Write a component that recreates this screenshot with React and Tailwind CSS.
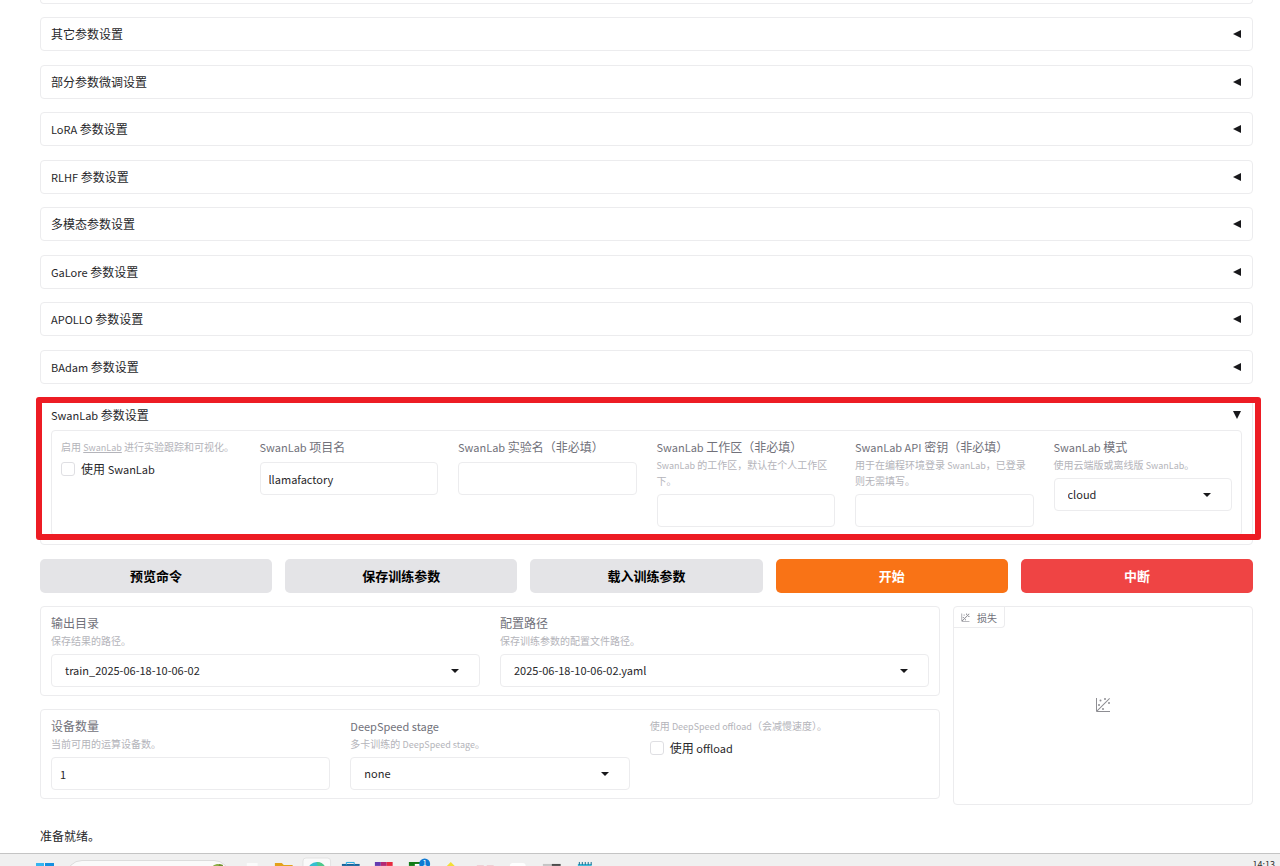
import React, { useState } from "react";

const COLLAPSED = [
  "其它参数设置",
  "部分参数微调设置",
  "LoRA 参数设置",
  "RLHF 参数设置",
  "多模态参数设置",
  "GaLore 参数设置",
  "APOLLO 参数设置",
  "BAdam 参数设置",
];

// latin words are set one size smaller than the chinese text around them
const Label = ({ children }) =>
  children.split(/([A-Za-z]+(?: [A-Za-z]+)*)/).map((part, i) =>
    i % 2 ? <span key={i} className="text-[11px] leading-none">{part}</span> : part
  );

const Small = ({ children }) =>
  children.split(/([A-Za-z]+(?: [A-Za-z]+)*)/).map((part, i) =>
    i % 2 ? <span key={i} className="text-[9px] leading-none">{part}</span> : part
  );

const PlotIcon = ({ className }) => (
  <svg viewBox="0 0 32 32" fill="currentColor" className={className} aria-hidden="true">
    <circle cx="20" cy="4" r="2" />
    <circle cx="8" cy="16" r="2" />
    <circle cx="28" cy="12" r="2" />
    <circle cx="11" cy="7" r="2" />
    <circle cx="16" cy="24" r="2" />
    <path d="M30 3.413L28.586 2L4 26.585V2H2v26a2 2 0 0 0 2 2h26v-2H5.413Z" />
  </svg>
);

const Field = ({ id, label, info, children }) => (
  <div className="min-w-0">
    <label htmlFor={id} className="block pb-[2px] text-xs leading-[17px] whitespace-nowrap text-[#71717a]">
      <Label>{label}</Label>
    </label>
    {info && (
      <p className="text-[10px] leading-4 text-[#b4b4ba]">
        <Small>{info}</Small>
      </p>
    )}
    <div className="mt-[5px]">{children}</div>
  </div>
);

const TextInput = ({ id, value = "" }) => {
  const [text, setText] = useState(value);

  return (
    <input
      id={id}
      type="text"
      value={text}
      onChange={e => setText(e.target.value)}
      className="block h-[33px] w-full rounded border border-[#ececee] bg-white px-2 text-[11px]"
    />
  );
};

const Select = ({ id, value }) => (
  <div className="relative">
    <select
      id={id}
      defaultValue={value}
      className="block h-[33px] w-full appearance-none rounded border border-[#ececee] bg-white px-[13px] text-[11px]"
    >
      <option value={value}>{value}</option>
    </select>
    <svg
      viewBox="0 0 8 4"
      className="pointer-events-none absolute top-[15px] right-[21px] h-1 w-2"
      aria-hidden="true"
    >
      <path d="M0 0h8L4 4z" fill="#18181b" />
    </svg>
  </div>
);

const Checkbox = ({ info, label }) => (
  <div className="min-w-0">
    <p className="pb-[2px] text-[10px] leading-[17px] whitespace-nowrap text-[#b4b4ba]">{info}</p>
    <label className="mt-[5px] flex h-[14px] items-center gap-[6px] text-xs whitespace-nowrap">
      <input
        type="checkbox"
        className="h-[14px] w-[14px] appearance-none rounded-[3px] border border-[#dfdfe3] bg-white checked:bg-orange-500"
      />
      <span>
        <Label>{label}</Label>
      </span>
    </label>
  </div>
);

const Accordion = ({ title }) => (
  <button
    type="button"
    className="flex h-[34px] w-full items-center justify-between rounded border border-[#ececee] pr-[11px] pl-[10px] text-xs"
  >
    <span>
      <Label>{title}</Label>
    </span>
    <svg viewBox="0 0 8 8" className="h-2 w-2" aria-hidden="true">
      <path d="M8 0v8L0 4z" fill="#18181b" />
    </svg>
  </button>
);

const SwanLab = () => (
  <section className="relative mt-[13px] rounded border border-[#ececee] px-[10px] pb-2">
    <button type="button" className="flex h-8 w-full items-center justify-between pt-[2px] pr-[1px] text-xs">
      <span>
        <Label>SwanLab 参数设置</Label>
      </span>
      <svg viewBox="0 0 8 8" className="h-2 w-2" aria-hidden="true">
        <path d="M0 0h8L4 8z" fill="#18181b" />
      </svg>
    </button>
    <div className="grid grid-cols-6 gap-5 rounded border border-[#ececee] px-[9px] pt-[7px] pb-2">
      <Checkbox
        info={
          <>
            启用 <a href="#swanlab" className="text-[9px] leading-none underline">SwanLab</a> 进行实验跟踪和可视化。
          </>
        }
        label="使用 SwanLab"
      />
      <Field id="project" label="SwanLab 项目名">
        <TextInput id="project" value="llamafactory" />
      </Field>
      <Field id="run" label="SwanLab 实验名（非必填）">
        <TextInput id="run" />
      </Field>
      <Field id="workspace" label="SwanLab 工作区（非必填）" info="SwanLab 的工作区，默认在个人工作区下。">
        <TextInput id="workspace" />
      </Field>
      <Field
        id="apikey"
        label="SwanLab API 密钥（非必填）"
        info="用于在编程环境登录 SwanLab，已登录则无需填写。"
      >
        <TextInput id="apikey" />
      </Field>
      <Field id="mode" label="SwanLab 模式" info="使用云端版或离线版 SwanLab。">
        <Select id="mode" value="cloud" />
      </Field>
    </div>
    {/* highlight frame around the whole section */}
    <div className="pointer-events-none absolute -top-px -right-[9px] bottom-1 -left-[5px] rounded-[3px] border-[6px] border-[#ed1c24]" />
  </section>
);

const Actions = () => (
  <div className="mt-[14px] grid grid-cols-5 gap-[13px] text-[13px] font-bold">
    <button type="button" className="h-[34px] rounded-[5px] bg-[#e4e4e7] text-black">预览命令</button>
    <button type="button" className="h-[34px] rounded-[5px] bg-[#e4e4e7] text-black">保存训练参数</button>
    <button type="button" className="h-[34px] rounded-[5px] bg-[#e4e4e7] text-black">载入训练参数</button>
    <button type="button" className="h-[34px] rounded-[5px] bg-[#f97316] text-white">开始</button>
    <button type="button" className="h-[34px] rounded-[5px] bg-[#ef4444] text-white">中断</button>
  </div>
);

const Output = () => (
  <div className="mt-[13px] grid grid-cols-[3fr_1fr] gap-[13px]">
    <div className="flex min-w-0 flex-col gap-[13px]">
      <div className="grid grid-cols-2 gap-5 rounded border border-[#ececee] px-[10px] pt-[7px] pb-2">
        <Field id="output" label="输出目录" info="保存结果的路径。">
          <Select id="output" value="train_2025-06-18-10-06-02" />
        </Field>
        <Field id="config" label="配置路径" info="保存训练参数的配置文件路径。">
          <Select id="config" value="2025-06-18-10-06-02.yaml" />
        </Field>
      </div>
      <div className="grid grid-cols-3 gap-5 rounded border border-[#ececee] px-[10px] pt-[7px] pb-2">
        <Field id="devices" label="设备数量" info="当前可用的运算设备数。">
          <TextInput id="devices" value="1" />
        </Field>
        <Field id="stage" label="DeepSpeed stage" info="多卡训练的 DeepSpeed stage。">
          <Select id="stage" value="none" />
        </Field>
        <Checkbox
          info={<Small>使用 DeepSpeed offload（会减慢速度）。</Small>}
          label="使用 offload"
        />
      </div>
    </div>
    <div className="flex h-[199px] flex-col rounded border border-[#ececee]">
      <div className="flex h-[21px] items-center gap-[7px] self-start rounded-br border-r border-b border-[#ececee] px-[7px] text-[10px] text-[#71717a]">
        <PlotIcon className="h-[9px] w-[9px]" />
        损失
      </div>
      <div className="flex grow items-center justify-center pb-[22px] text-[#8e8e93]">
        <PlotIcon className="h-4 w-4" />
      </div>
    </div>
  </div>
);

const Tile = ({ children }) => (
  <svg viewBox="0 0 34 12" className="h-3 min-w-0 flex-1" aria-hidden="true">
    {children}
  </svg>
);

const Taskbar = () => (
  <footer className="mt-auto flex h-[13px] items-start overflow-hidden border-t border-[#c4c4c4] bg-[#f0f0f0]">
    <svg viewBox="0 0 18 12" className="ml-9 h-3 w-[18px]" aria-hidden="true">
      <path d="M0 9h8v3H0z" fill="#35b5f1" />
      <path d="M9 9h9v3H9z" fill="#1490e0" />
    </svg>
    <div className="mt-[6px] ml-3 h-8 w-[164px] shrink-0 rounded-full border border-[#dcdcdc] bg-[#fafafa]">
      <svg viewBox="0 0 14 5" className="mt-[2px] ml-36 h-[5px] w-[14px]" aria-hidden="true">
        <path d="M0 5c2-3 5-4 7-4l5 1v3z" fill="#8fae4a" />
        <path d="M8 1l4 1-2 3H7z" fill="#6f8f2e" />
      </svg>
    </div>
    <div className="ml-[3px] flex w-[369px]">
      <Tile>
        <path d="M14 9h11v3H14z" fill="#fbfbfb" />
      </Tile>
      <Tile>
        <path d="M8 9h7l2 2h9v1H8z" fill="#e3a21a" />
      </Tile>
      <Tile>
        <rect x="3" y="4" width="28" height="14" rx="3" fill="#fafafa" stroke="#e2e2e2" />
        <circle cx="17" cy="17" r="9" fill="#35bfd0" />
        <path d="M17 8a9 9 0 0 1 8 4h-7z" fill="#4fc98c" />
      </Tile>
      <Tile>
        <path d="M8 10h18v2H8z" fill="#15639b" />
        <path d="M12.500 11V8.500h8V11" fill="none" stroke="#27a9df" />
      </Tile>
      <Tile>
        <path d="M8 8h6v4H8z" fill="#633bb0" />
        <path d="M14 8h6v4h-6z" fill="#b32a75" />
        <path d="M20 8h6v4h-6z" fill="#e72b40" />
      </Tile>
      <Tile>
        <path d="M8 8h16v4H8z" fill="#127b16" />
        <path d="M14 10h8v2h-8z" fill="#fff" />
        <circle cx="24" cy="10" r="5.500" fill="#0f79d2" />
        <text x="24" y="12" textAnchor="middle" fontSize="8" fill="#fff">1</text>
      </Tile>
      <Tile>
        <path d="M17 8l4 4h-8z" fill="#f3df35" />
      </Tile>
      <Tile>
        <path d="M9 11h7v1H9zM19 11h7v1h-7z" fill="#eecfd4" />
      </Tile>
      <Tile>
        <rect x="9" y="9" width="16" height="8" rx="3" fill="#fff" />
      </Tile>
      <Tile>
        <path d="M8 10h9v2H8z" fill="#c4c4c4" />
        <path d="M17 10h9v2h-9z" fill="#4c4c4c" />
      </Tile>
      <Tile>
        <path d="M10 10h14v2H10z" fill="#35b4d5" />
        <path d="M11.500 8v3M14.500 8v3M17.500 8v3M20.500 8v3M23.500 8v3" stroke="#176e8f" />
      </Tile>
    </div>
    <time className="mt-[5px] mr-[5px] ml-auto text-[9px] leading-3 text-[#333]">14:13</time>
  </footer>
);

const App = () => (
  <div className="flex min-h-screen flex-col bg-white font-['Noto_Sans_CJK_SC',sans-serif] text-[#27272a]">
    <main className="pr-[27px] pl-10">
      <div className="h-1 rounded-b border-x border-b border-[#ececee]" />
      <div className="mt-[13px] flex h-[367px] flex-col justify-between">
        {COLLAPSED.map(title => (
          <Accordion key={title} title={title} />
        ))}
      </div>
      <SwanLab />
      <Actions />
      <Output />
      <p className="mt-[22px] text-xs leading-[18px]">准备就绪。</p>
    </main>
    <Taskbar />
  </div>
);

export default App;
